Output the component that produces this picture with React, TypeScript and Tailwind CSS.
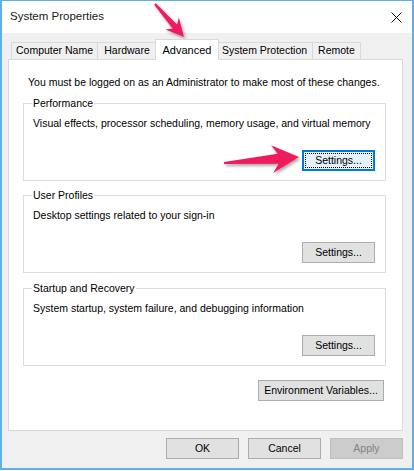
import React from "react";
import clsx from "clsx";

const font = "font-['Liberation_Sans',Arial,sans-serif]";

type Pt = [number, number];

// build an annotation arrow polygon from tail to tip
const arrowPoints = (tail: Pt, tip: Pt, head: number, headHalf: number, shaftHalf: number, barb: number) => {
    const dx = tip[0] - tail[0];
    const dy = tip[1] - tail[1];
    const len = Math.sqrt(dx * dx + dy * dy);
    const ux = dx / len;
    const uy = dy / len;
    const local: Pt[] = [
        [0, -1],
        [len - head + barb, -shaftHalf],
        [len - head, -headHalf],
        [len, 0],
        [len - head, headHalf],
        [len - head + barb, shaftHalf],
        [0, 1],
    ];
    return local
        .map(([a, b]) => `${(tail[0] + a * ux - b * uy).toFixed(1)},${(tail[1] + a * uy + b * ux).toFixed(1)}`)
        .join(" ");
};

interface BtnProps {
    children: React.ReactNode;
    className?: string;
    focused?: boolean;
    disabled?: boolean;
}

const Btn = ({ children, className, focused, disabled }: BtnProps) => {
    if (focused) {
        return (
            <button className={clsx("h-[21px] border-2 border-[#0078d7] bg-[#e5f1fb] p-px text-[10.5px] text-black", className)}>
                <span className="flex h-full w-full items-center justify-center border border-dotted border-black">
                    {children}
                </span>
            </button>
        );
    }
    return (
        <button
            className={clsx(
                "flex h-[21px] items-center justify-center border text-[10.5px]",
                disabled ? "border-[#bfbfbf] bg-[#cccccc] text-[#838383]" : "border-[#adadad] bg-[#e1e1e1] text-black",
                className
            )}
        >
            {children}
        </button>
    );
};

const GroupBox = ({ label, text, focused }: { label: string; text: string; focused?: boolean }) => (
    <div className="relative border border-[#dcdcdc] pb-[9px] pl-[9px] pr-[10px] pt-[12px]">
        <span className="absolute left-[8px] top-[-8px] bg-white px-px leading-[14px]">{label}</span>
        <p className="leading-[14px]">{text}</p>
        <div className="mt-[20px] flex justify-end">
            <Btn focused={focused} className="w-[73px]">Settings...</Btn>
        </div>
    </div>
);

const tabs = [
    { label: "Computer Name", w: "w-[87px]" },
    { label: "Hardware", w: "w-[59px]" },
    { label: "Advanced", w: "w-[64px]", active: true },
    { label: "System Protection", w: "w-[96px]" },
    { label: "Remote", w: "w-[48px]" },
];

const App = () => {
    return (
        <div className="bg-white">
            <div className={clsx("relative flex h-[470px] w-[414px] flex-col border-x-2 border-b-2 border-t border-[#5fb0e8] bg-[#f0f0f0] text-[10.5px] text-black", font)}>
                {/* title bar */}
                <div className="flex h-[32px] items-center justify-between bg-white pl-[8px] pr-[10px]">
                    <span className="text-[11.5px] text-[#1a1a1a]">System Properties</span>
                    <svg width="11" height="11" viewBox="0 0 11 11">
                        <path d="M0.5 0.5 L10.5 10.5 M10.5 0.5 L0.5 10.5" stroke="#111" strokeWidth="1" />
                    </svg>
                </div>

                <div className="flex flex-1 flex-col pl-[6px] pr-[9px] pt-[6px]">
                    {/* tabs */}
                    <div className="relative z-10 -mb-px flex items-end pl-[3px]">
                        {tabs.map((t, i) =>
                            t.active ? (
                                <div
                                    key={t.label}
                                    className={clsx("-ml-[2px] -mr-[2px] z-10 flex h-[21px] items-start justify-center border-x border-t border-[#d9d9d9] bg-white pt-[3px]", t.w)}
                                >
                                    <span className="text-[11px] leading-[14px]">{t.label}</span>
                                </div>
                            ) : (
                                <div
                                    key={t.label}
                                    className={clsx("mb-px flex h-[17px] items-center justify-center border-t border-r border-[#d9d9d9] bg-[#f0f0f0]", i === 0 && "border-l", t.w)}
                                >
                                    {t.label}
                                </div>
                            )
                        )}
                    </div>

                    {/* panel */}
                    <div className="flex h-[372px] flex-col border border-[#d9d9d9] bg-white pl-[14px] pt-[15px]">
                        <p className="ml-[5px] leading-[14px]">You must be logged on as an Administrator to make most of these changes.</p>
                        <div className="mt-[14px] flex w-[363px] flex-col">
                            <GroupBox
                                label="Performance"
                                text="Visual effects, processor scheduling, memory usage, and virtual memory"
                                focused
                            />
                            <div className="mt-[14px]">
                                <GroupBox label="User Profiles" text="Desktop settings related to your sign-in" />
                            </div>
                            <div className="mt-[15px]">
                                <GroupBox label="Startup and Recovery" text="System startup, system failure, and debugging information" />
                            </div>
                            <div className="mt-[14px] flex justify-end pr-[2px]">
                                <Btn className="w-[126px]">Environment Variables...</Btn>
                            </div>
                        </div>
                    </div>

                    {/* footer */}
                    <div className="mt-[7px] flex justify-end gap-[9px]">
                        <Btn className="w-[73px]">OK</Btn>
                        <Btn className="w-[73px]">Cancel</Btn>
                        <Btn className="w-[73px]" disabled>Apply</Btn>
                    </div>
                </div>

                {/* annotation arrows */}
                <svg className="pointer-events-none absolute left-[-2px] top-[-1px]" width="414" height="470">
                    <defs>
                        <filter id="shadow" x="-20%" y="-20%" width="140%" height="140%">
                            <feDropShadow dx="1.5" dy="2" stdDeviation="1.5" floodColor="#000" floodOpacity="0.35" />
                        </filter>
                    </defs>
                    <polygon points={arrowPoints([155, 4], [184, 37], 18, 9, 3, 4)} fill="#ee1d5f" filter="url(#shadow)" />
                    <polygon points={arrowPoints([224, 163], [299, 157], 27, 14, 5, 6)} fill="#ee1d5f" filter="url(#shadow)" />
                </svg>
            </div>
        </div>
    );
};

export default App;
